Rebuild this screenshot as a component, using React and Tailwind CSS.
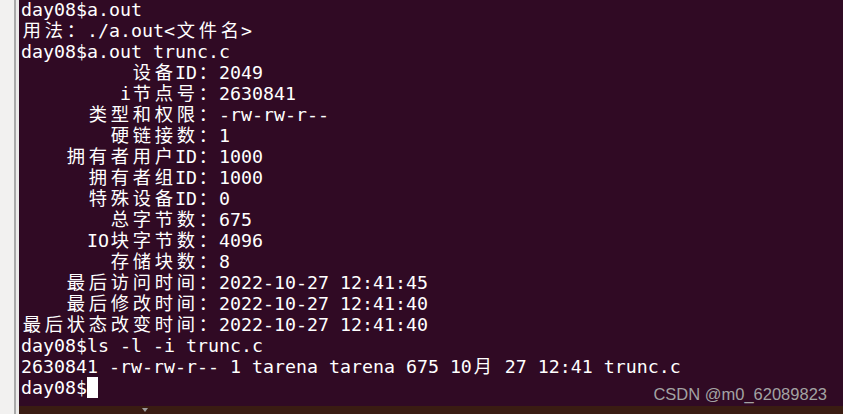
import React from "react";

const wide = /[\u2e80-\u9fff\uf900-\ufaff\uff00-\uffef]/;

const lines = [
  "day08$a.out",
  "用法：./a.out<文件名>",
  "day08$a.out trunc.c",
  "          设备ID：2049",
  "         i节点号：2630841",
  "      类型和权限：-rw-rw-r--",
  "        硬链接数：1",
  "    拥有者用户ID：1000",
  "      拥有者组ID：1000",
  "      特殊设备ID：0",
  "        总字节数：675",
  "      IO块字节数：4096",
  "        存储块数：8",
  "    最后访问时间：2022-10-27 12:41:45",
  "    最后修改时间：2022-10-27 12:41:40",
  "最后状态改变时间：2022-10-27 12:41:40",
  "day08$ls -l -i trunc.c",
  "2630841 -rw-rw-r-- 1 tarena tarena 675 10月 27 12:41 trunc.c",
];

// each wide char takes two cells, like the terminal grid
function TermLine({ text }) {
  const parts = [];
  let buf = "";
  [...text].forEach((ch, i) => {
    if (wide.test(ch)) {
      if (buf) parts.push(buf);
      buf = "";
      parts.push(
        <span key={i} className="inline-block w-[22px] text-center">
          {ch}
        </span>
      );
    } else {
      buf += ch;
    }
  });
  if (buf) parts.push(buf);
  return <div className="h-[21px] whitespace-pre leading-[21px]">{parts}</div>;
}

export default function App() {
  return (
    <div className="relative flex h-[414px] w-[843px] overflow-hidden bg-[#f2f1f0]">
      {/* left window edge */}
      <div className="flex h-full w-[19px] shrink-0">
        <div className="w-[14px] bg-[#f2f1f0]" />
        <div className="w-[2px] bg-[#a9a9a9]" />
        <div className="w-[3px] bg-[#ecebea]" />
      </div>

      <div className="flex flex-1 flex-col">
        {/* terminal */}
        <div className="h-[406px] bg-[#300a24] pl-[2px] font-['DejaVu_Sans_Mono','Noto_Sans_CJK_SC',monospace] text-[18.27px] text-white">
          <div className="-mt-px">
            {lines.map((l, i) => (
              <TermLine key={i} text={l} />
            ))}
            <div className="flex h-[21px] whitespace-pre leading-[21px]">
              day08$
              <span className="inline-block h-[21px] w-[11px] bg-white" />
            </div>
          </div>
        </div>
        {/* bottom edge */}
        <div className="flex h-[8px] bg-[#3a1c12] pl-[123px]">
          <div className="mt-[2px] h-0 w-0 border-x-[3px] border-t-[4px] border-x-transparent border-t-[#9c9c9c]" />
        </div>
      </div>

      <div className="absolute right-[16px] top-[384px] font-['Liberation_Sans',Arial,sans-serif] text-[16.5px] leading-[20px] text-[#a3a3a3]">
        CSDN @m0_62089823
      </div>
    </div>
  );
}
